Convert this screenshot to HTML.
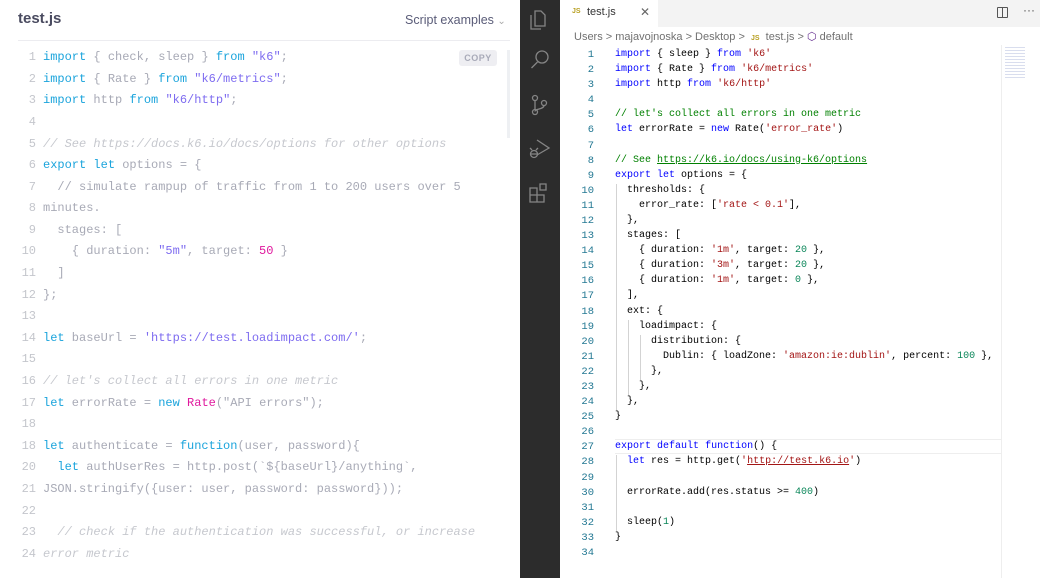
<!DOCTYPE html>
<html><head><meta charset="utf-8"><style>
*{margin:0;padding:0;box-sizing:border-box}
body{width:1040px;height:578px;overflow:hidden;background:#fff;position:relative;font-family:"Liberation Sans",sans-serif}
#L{position:absolute;left:0;top:0;width:520px;height:578px;background:#fff}
#L .t{position:absolute;left:18px;top:10px;font-size:15px;font-weight:bold;color:#4a4b60}
#L .se{position:absolute;left:405px;top:13px;font-size:12.5px;color:#5a5c78}
#L .hr{position:absolute;left:18px;right:10px;top:40px;border-top:1px solid #ececf0}
#L .copy{position:absolute;left:459px;top:50px;width:38px;height:16px;background:#eeeef2;border-radius:3px;font-size:9px;color:#a8aab8;text-align:center;line-height:16px;font-weight:bold;letter-spacing:.5px}
#L .sb{position:absolute;left:507px;top:50px;width:3px;height:88px;background:#eef0f3}
.lc{position:absolute;left:0;font-family:"Liberation Mono",monospace;font-size:12px;white-space:pre;color:#a8aab6;line-height:14px}
.lc .n{display:inline-block;width:43px;text-align:right;padding-right:7px;color:#c4c6cc}
.k{color:#1ba4dc}.s{color:#7e6cf0}.c{color:#c6c8ce;font-style:italic}.m{color:#e0199e}
#R{position:absolute;left:520px;top:0;width:520px;height:578px;background:#fff}
#act{position:absolute;left:0;top:0;width:40px;height:578px;background:#2c2c2c}
#tabs{position:absolute;left:40px;top:0;right:0;height:27px;background:#f3f3f3}
#tab{position:absolute;left:40px;top:0;width:98px;height:27px;background:#fff;font-size:11px;color:#333}
.bc{position:absolute;left:54px;top:30px;font-size:11px;color:#717171;white-space:pre}
.vc{position:absolute;font-family:"Liberation Mono",monospace;font-size:10px;white-space:pre;color:#000;line-height:12px}
.vn{position:absolute;font-family:"Liberation Mono",monospace;font-size:10.5px;color:#237893;width:30px;text-align:right;line-height:12px}
.kb{color:#0000ff}.st{color:#a31515}.cm{color:#008000}.nu{color:#098658}
.g{position:absolute;border-left:1px solid #d3d3d3}
</style></head><body>
<div id="L">
<div class="t">test.js</div>
<div class="se">Script examples <span style="color:#aaa;font-size:10px">&#8964;</span></div>
<div class="hr"></div>
<div class="copy">COPY</div>
<div class="sb"></div>
<div class="lc" style="top:50px"><span class="n">1</span><span class="k">import</span> { check, sleep } <span class="k">from</span> <span class="s">"k6"</span>;</div>
<div class="lc" style="top:72px"><span class="n">2</span><span class="k">import</span> { Rate } <span class="k">from</span> <span class="s">"k6/metrics"</span>;</div>
<div class="lc" style="top:93px"><span class="n">3</span><span class="k">import</span> http <span class="k">from</span> <span class="s">"k6/http"</span>;</div>
<div class="lc" style="top:115px"><span class="n">4</span></div>
<div class="lc" style="top:137px"><span class="n">5</span><span class="c">// See https://docs.k6.io/docs/options for other options</span></div>
<div class="lc" style="top:158px"><span class="n">6</span><span class="k">export</span> <span class="k">let</span> options = {</div>
<div class="lc" style="top:180px"><span class="n">7</span>  // simulate rampup of traffic from 1 to 200 users over 5</div>
<div class="lc" style="top:201px"><span class="n">8</span>minutes.</div>
<div class="lc" style="top:223px"><span class="n">9</span>  stages: [</div>
<div class="lc" style="top:244px"><span class="n">10</span>    { duration: <span class="s">"5m"</span>, target: <span class="m">50</span> }</div>
<div class="lc" style="top:266px"><span class="n">11</span>  ]</div>
<div class="lc" style="top:288px"><span class="n">12</span>};</div>
<div class="lc" style="top:309px"><span class="n">13</span></div>
<div class="lc" style="top:331px"><span class="n">14</span><span class="k">let</span> baseUrl = <span class="s">'https://test.loadimpact.com/'</span>;</div>
<div class="lc" style="top:352px"><span class="n">15</span></div>
<div class="lc" style="top:374px"><span class="n">16</span><span class="c">// let's collect all errors in one metric</span></div>
<div class="lc" style="top:396px"><span class="n">17</span><span class="k">let</span> errorRate = <span class="k">new</span> <span class="m">Rate</span>("API errors");</div>
<div class="lc" style="top:417px"><span class="n">18</span></div>
<div class="lc" style="top:439px"><span class="n">18</span><span class="k">let</span> authenticate = <span class="k">function</span>(user, password){</div>
<div class="lc" style="top:460px"><span class="n">20</span>  <span class="k">let</span> authUserRes = http.post(`${baseUrl}/anything`,</div>
<div class="lc" style="top:482px"><span class="n">21</span>JSON.stringify({user: user, password: password}));</div>
<div class="lc" style="top:504px"><span class="n">22</span></div>
<div class="lc" style="top:525px"><span class="n">23</span>  <span class="c">// check if the authentication was successful, or increase</span></div>
<div class="lc" style="top:547px"><span class="n">24</span><span class="c">error metric</span></div>
</div>
<div id="R">
<div id="act">
<svg width="40" height="220" fill="none" stroke="#858585" stroke-width="1.3">
<path d="M15 11h6l4 4v11h-10z M11 15v14h10"/>
<circle cx="22" cy="57" r="6"/><path d="M17.5 62l-6 6"/>
<circle cx="15" cy="98" r="2.5"/><circle cx="15" cy="112" r="2.5"/><circle cx="24" cy="103" r="2.5"/><path d="M15 100.5v9 M24 105.5c0 4-9 3-9 6"/>
<path d="M17 140l12 8-12 7"/><circle cx="14" cy="154" r="3.5"/><path d="M10 154h8 M12 150l-2-2 M16 150l2-2"/>
<path d="M10 188h7v7h-7z M10 195h7v7h-7z M17 195h7v7h-7z M20 184h6v6h-6z"/>
</svg>
</div>
<div id="tabs"></div>
<div id="tab"><span style="position:absolute;left:12px;top:8px;font-size:7px;color:#b8a022;font-weight:bold">JS</span><span style="position:absolute;left:27px;top:6px">test.js</span><span style="position:absolute;left:80px;top:5px;font-size:12px;color:#666">✕</span></div>
<div style="position:absolute;left:477px;top:7px;width:11px;height:11px;border:1.3px solid #555;border-radius:1px"></div>
<div style="position:absolute;left:482px;top:7px;height:11px;border-left:1.3px solid #555"></div>
<div style="position:absolute;left:503px;top:3px;font-size:12px;color:#555">···</div>
<div class="bc">Users &gt; majavojnoska &gt; Desktop &gt;  <span style="color:#b8a022;font-size:7px;font-weight:bold">JS</span>  test.js &gt; <span style="color:#652d90">⬡</span> default</div>
<div style="position:absolute;left:481px;top:45px;bottom:0;border-left:1px solid #eee"></div>
<div style="position:absolute;left:485px;top:45px;width:20px;height:35px;background:repeating-linear-gradient(#fff 0,#fff 2px,#c9cfe6 2px,#c9cfe6 3px);opacity:.7"></div>
<div style="position:absolute;left:95px;top:439px;width:386px;height:15px;border-top:1px solid #eee;border-bottom:1px solid #eee"></div>
<div class="g" style="left:96px;top:184px;height:226px"></div>
<div class="g" style="left:108px;top:320px;height:75px"></div>
<div class="g" style="left:120px;top:335px;height:45px"></div>
<div class="g" style="left:96px;top:455px;height:76px"></div>
<div id="vcode"></div>
</div>
<script>
var L=[
'<span class="kb">import</span> { sleep } <span class="kb">from</span> <span class="st">\'k6\'</span>',
'<span class="kb">import</span> { Rate } <span class="kb">from</span> <span class="st">\'k6/metrics\'</span>',
'<span class="kb">import</span> http <span class="kb">from</span> <span class="st">\'k6/http\'</span>',
'',
'<span class="cm">// let\'s collect all errors in one metric</span>',
'<span class="kb">let</span> errorRate = <span class="kb">new</span> Rate(<span class="st">\'error_rate\'</span>)',
'',
'<span class="cm">// See <u>https://k6.io/docs/using-k6/options</u></span>',
'<span class="kb">export</span> <span class="kb">let</span> options = {',
'  thresholds: {',
'    error_rate: [<span class="st">\'rate &lt; 0.1\'</span>],',
'  },',
'  stages: [',
'    { duration: <span class="st">\'1m\'</span>, target: <span class="nu">20</span> },',
'    { duration: <span class="st">\'3m\'</span>, target: <span class="nu">20</span> },',
'    { duration: <span class="st">\'1m\'</span>, target: <span class="nu">0</span> },',
'  ],',
'  ext: {',
'    loadimpact: {',
'      distribution: {',
'        Dublin: { loadZone: <span class="st">\'amazon:ie:dublin\'</span>, percent: <span class="nu">100</span> },',
'      },',
'    },',
'  },',
'}',
'',
'<span class="kb">export</span> <span class="kb">default</span> <span class="kb">function</span>() {',
'  <span class="kb">let</span> res = http.get(<span class="st">\'<u>http://test.k6.io</u>\'</span>)',
'',
'  errorRate.add(res.status &gt;= <span class="nu">400</span>)',
'',
'  sleep(<span class="nu">1</span>)',
'}',
''];
var h='';for(var i=0;i<L.length;i++){var y=49+i*15.09;
h+='<div class="vn" style="left:44px;top:'+y+'px">'+(i+1)+'</div><div class="vc" style="left:95px;top:'+y+'px">'+L[i]+'</div>';}
document.getElementById('vcode').innerHTML=h;
</script>
</body></html>
